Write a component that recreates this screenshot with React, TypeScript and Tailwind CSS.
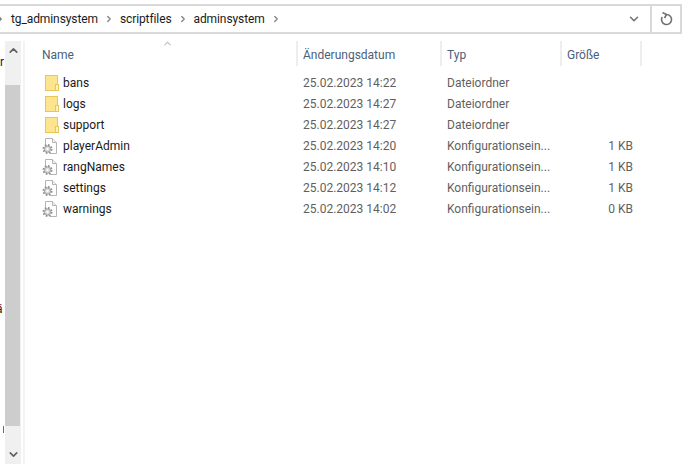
import { ChevronRight, ChevronDown, ChevronUp } from "lucide-react";

interface FileRow {
  name: string;
  date: string;
  type: string;
  size: string;
  isFolder: boolean;
}

const rows: FileRow[] = [
  { name: "bans", date: "25.02.2023 14:22", type: "Dateiordner", size: "", isFolder: true },
  { name: "logs", date: "25.02.2023 14:27", type: "Dateiordner", size: "", isFolder: true },
  { name: "support", date: "25.02.2023 14:27", type: "Dateiordner", size: "", isFolder: true },
  { name: "playerAdmin", date: "25.02.2023 14:20", type: "Konfigurationsein...", size: "1 KB", isFolder: false },
  { name: "rangNames", date: "25.02.2023 14:10", type: "Konfigurationsein...", size: "1 KB", isFolder: false },
  { name: "settings", date: "25.02.2023 14:12", type: "Konfigurationsein...", size: "1 KB", isFolder: false },
  { name: "warnings", date: "25.02.2023 14:02", type: "Konfigurationsein...", size: "0 KB", isFolder: false },
];

const crumbs = ["tg_adminsystem", "scriptfiles", "adminsystem"];

function FolderIcon() {
  return (
    <svg width="14" height="16" viewBox="0 0 14 16">
      <rect x="0.5" y="0.5" width="12" height="15" fill="#fde58f" stroke="#e8c757" />
      <rect x="10.5" y="9.5" width="3" height="6" fill="#fff3bd" stroke="#e8c757" />
    </svg>
  );
}

function ConfigIcon() {
  return (
    <svg width="15" height="16" viewBox="0 0 15 16" className="ml-[-3px]">
      <path d="M3.5 7V0.5H10.5L14.5 4.5V15.5H8" fill="#fff" stroke="#b4b4b4" />
      <path d="M10.5 0.5V4.5H14.5" fill="#f0f0f0" stroke="#b4b4b4" />
      <circle cx="5.5" cy="11" r="4" fill="#e6e6e6" stroke="#8f8f8f" strokeWidth="2" strokeDasharray="1.6 1.54" />
      <circle cx="5.5" cy="11" r="3" fill="#dcdcdc" stroke="#a6a6a6" />
      <circle cx="5.5" cy="11" r="1.1" fill="#ffffff" />
    </svg>
  );
}

function RefreshIcon() {
  return (
    <svg width="13" height="14" viewBox="0 0 13 14" fill="none" stroke="#707070">
      <path d="M6.5 2.5A5 5 0 1 1 2.2 5" strokeWidth="1.6" />
      <path d="M2.5 0.5L6.5 2.5L4.5 6" strokeWidth="1.6" />
    </svg>
  );
}

export default function App() {
  return (
    <div className="w-[690px] h-[473px] bg-white overflow-hidden flex flex-col font-['Roboto',sans-serif] text-[12px]">
      {/* Address bar */}
      <div className="mt-[4px] h-[30px] mr-[8px] flex items-center border-y-2 border-r-2 border-[#d9d9d9]">
        <ChevronRight size={10} strokeWidth={3} color="#808080" className="ml-[-5px] mr-[6px]" />
        {crumbs.map((c) => (
          <div key={c} className="flex items-center">
            <span className="text-[#1a1a1a] tracking-[-0.1px]">{c}</span>
            <ChevronRight size={10} strokeWidth={3} color="#808080" className="mx-[6px]" />
          </div>
        ))}
        <div className="ml-auto flex items-center h-full">
          <ChevronDown size={14} strokeWidth={2.5} color="#6d6d6d" className="mr-[9px]" />
          <div className="w-[30px] h-full border-l-2 border-[#d9d9d9] flex items-center justify-center">
            <RefreshIcon />
          </div>
        </div>
      </div>

      <div className="flex flex-1 min-h-0 pl-[5px] pt-[7px] pb-[9px] relative">
        {/* Clipped text of the pane behind */}
        <span className="absolute left-0 top-[19px] text-[#4a0c1c]">r</span>
        <span className="absolute left-[-4px] top-[266px] text-[#4a0c1c]">ä</span>
        <div className="absolute left-[3px] top-[392px] w-[1px] h-[7px] bg-[#8a6a10]" />

        {/* Scrollbar */}
        <div className="w-[16px] flex flex-col bg-[#f0f0f0] items-center">
          <div className="h-[44px] w-full pt-[3px] flex justify-center">
            <ChevronUp size={13} strokeWidth={3} color="#606060" />
          </div>
          <div className="h-[341px] w-[15px] mr-[1px] bg-[#cdcdcd]" />
          <div className="flex-1 flex items-end justify-center pb-[3px]">
            <ChevronDown size={13} strokeWidth={3} color="#606060" />
          </div>
        </div>
        <div className="w-[2px] ml-[2px] bg-[#f3f3f3]" />

        {/* File list */}
        <div className="flex-1 min-w-0">
          <div className="relative h-[25px] flex text-[#4c607a]">
            <ChevronUp size={11} strokeWidth={1.5} color="#707070" className="absolute left-[137px] top-[-3px]" />
            <div className="w-[271px] pl-[17px] pt-[5px]">Name</div>
            <div className="w-[144px] pl-[5px] pt-[5px] border-l-2 border-[#eeeeee]">Änderungsdatum</div>
            <div className="w-[120px] pl-[5px] pt-[5px] border-l-2 border-[#eeeeee]">Typ</div>
            <div className="w-[82px] pl-[5px] pt-[5px] border-x-2 border-[#eeeeee]">Größe</div>
          </div>
          <div className="mt-[6px]">
            {rows.map((r) => (
              <div key={r.name} className="h-[21px] flex items-center text-[#5f5f5f]">
                <div className="w-[271px] pl-[20px] flex items-center">
                  <div className="w-[18px] flex-none">
                    {r.isFolder ? <FolderIcon /> : <ConfigIcon />}
                  </div>
                  <span className="text-[#1a1a1a]">{r.name}</span>
                </div>
                <div className="w-[144px] pl-[7px]">{r.date}</div>
                <div className="w-[120px] pl-[7px]">{r.type}</div>
                <div className="w-[73px] text-right">{r.size}</div>
              </div>
            ))}
          </div>
        </div>
      </div>
    </div>
  );
}
